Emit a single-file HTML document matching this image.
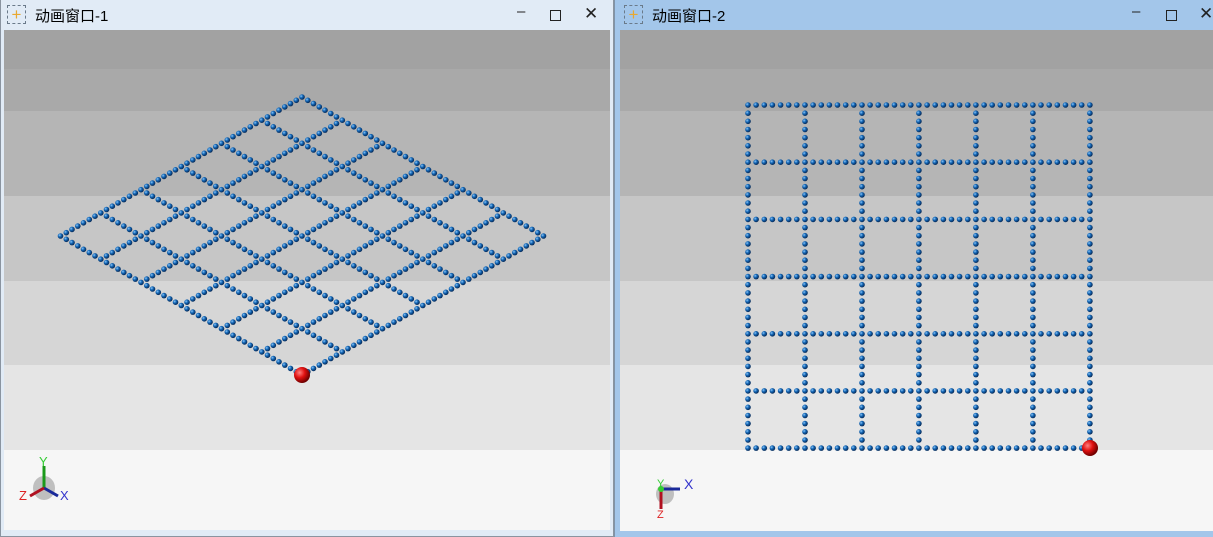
<!DOCTYPE html>
<html><head><meta charset="utf-8"><style>
*{margin:0;padding:0;box-sizing:border-box}
body{width:1213px;height:537px;overflow:hidden;background:#f0f0f0;font-family:"Liberation Sans","Noto Sans CJK SC",sans-serif;position:relative}
.win{position:absolute;top:0;height:537px}
.tb{position:absolute;left:0;right:0;top:0;height:30px;font-size:15px;color:#000}
.tb .t{position:absolute;left:34px;top:5px}
.ic{position:absolute;left:6px;top:5px;width:19px;height:19px;border:1px dashed #6a7a8a;color:#e8a830;font-size:17px;line-height:17px;text-align:center}
.btn{position:absolute;top:5px;font-size:15px;color:#222}
.cl{position:absolute;top:30px;overflow:hidden}
.band{position:absolute;left:0;right:0}
</style></head><body>
<div class="win" style="left:0;width:614px;background:#e1ebf6;border:1px solid #8a94a0;border-top:none">
 <div class="tb"><div class="ic">+</div><div class="t">动画窗口-1</div>
 <div class="btn" style="left:516px;top:3px">–</div><div class="btn" style="left:549px;width:11px;height:11px;border:1px solid #222;top:10px"></div><div class="btn" style="left:583px;top:4px;font-size:17px">✕</div></div>
 <div class="cl" id="c1" style="left:3px;width:606px;height:500px"></div>
</div>
<div class="win" style="left:614px;width:599px;background:#a3c6ea;border-left:1px solid #7f93a8">
 <div class="tb"><div class="ic" style="left:9px">+</div><div class="t" style="left:37px">动画窗口-2</div>
 <div class="btn" style="left:517px;top:3px">–</div><div class="btn" style="left:551px;width:11px;height:11px;border:1px solid #222;top:10px"></div><div class="btn" style="left:584px;top:4px;font-size:17px">✕</div></div>
 <div class="cl" id="c2" style="left:5px;width:593px;height:501px"></div>
</div>
<script>
var bands=[[0,39,'#a2a2a2'],[39,81,'#a9a9a9'],[81,166,'#b5b5b5'],[166,251,'#c6c6c6'],[251,335,'#d6d6d6'],[335,420,'#e5e5e5'],[420,520,'#f6f6f6']];
function fill(id,ox,oy,isDiamond,bx,by){
 var el=document.getElementById(id);var h='';
 bands.forEach(function(b){h+='<div class="band" style="top:'+b[0]+'px;height:'+(b[1]-b[0])+'px;background:'+b[2]+'"></div>';});
 var s='<svg width="'+el.style.width+'" height="520" style="position:absolute;left:0;top:0"><defs><radialGradient id="g'+id+'" cx="35%" cy="35%" r="65%"><stop offset="0" stop-color="#8fc8f8"/><stop offset=".45" stop-color="#1468b8"/><stop offset="1" stop-color="#062a58"/></radialGradient><radialGradient id="r'+id+'" cx="35%" cy="35%" r="65%"><stop offset="0" stop-color="#ff8080"/><stop offset=".5" stop-color="#e01010"/><stop offset="1" stop-color="#700000"/></radialGradient></defs>';
 for(var i=0;i<=42;i++)for(var j=0;j<=42;j++){if(i%7&&j%7)continue;
  var x,y;
  if(isDiamond){x=301-ox+(i-j)*5.75;y=97-oy+(i+j)*3.31;}
  else{x=748-ox+i*8.14;y=105-oy+j*8.17;}
  s+='<circle cx="'+x.toFixed(1)+'" cy="'+y.toFixed(1)+'" r="2.8" fill="url(#g'+id+')"/>';}
 s+='<circle cx="'+(bx-ox)+'" cy="'+(by-oy)+'" r="8" fill="url(#r'+id+')"/>';
 s+='</svg>';el.innerHTML=h+s;
}
fill('c1',3,30,true,301,375);
fill('c2',620,30,false,1090,448);
</script>
<svg style="position:absolute;left:15px;top:452px" width="60" height="55">
<ellipse cx="29" cy="36" rx="11" ry="12" fill="#a8a8a8" opacity=".7"/>
<line x1="29" y1="36" x2="29" y2="14" stroke="#1a9a1a" stroke-width="3"/>
<line x1="29" y1="36" x2="43" y2="44" stroke="#1a2a9a" stroke-width="3"/>
<line x1="29" y1="36" x2="15" y2="44" stroke="#b01020" stroke-width="3"/>
<text x="24" y="14" font-size="13" fill="#3c3" font-family="Liberation Sans">Y</text>
<text x="45" y="48" font-size="13" fill="#33c" font-family="Liberation Sans">X</text>
<text x="4" y="48" font-size="13" fill="#d22" font-family="Liberation Sans">Z</text>
</svg>
<svg style="position:absolute;left:650px;top:475px" width="50" height="45">
<ellipse cx="15" cy="19" rx="9" ry="10" fill="#a8a8a8" opacity=".7"/>
<line x1="11" y1="14" x2="30" y2="14" stroke="#1a2a9a" stroke-width="3"/>
<line x1="11" y1="14" x2="11" y2="34" stroke="#b01020" stroke-width="3"/>
<circle cx="11" cy="14" r="3" fill="#3c3"/>
<text x="7" y="12" font-size="11" fill="#3c3" font-family="Liberation Sans">Y</text>
<text x="34" y="14" font-size="14" fill="#33c" font-family="Liberation Sans">X</text>
<text x="7" y="43" font-size="11" fill="#d22" font-family="Liberation Sans">Z</text>
</svg>
</body></html>
